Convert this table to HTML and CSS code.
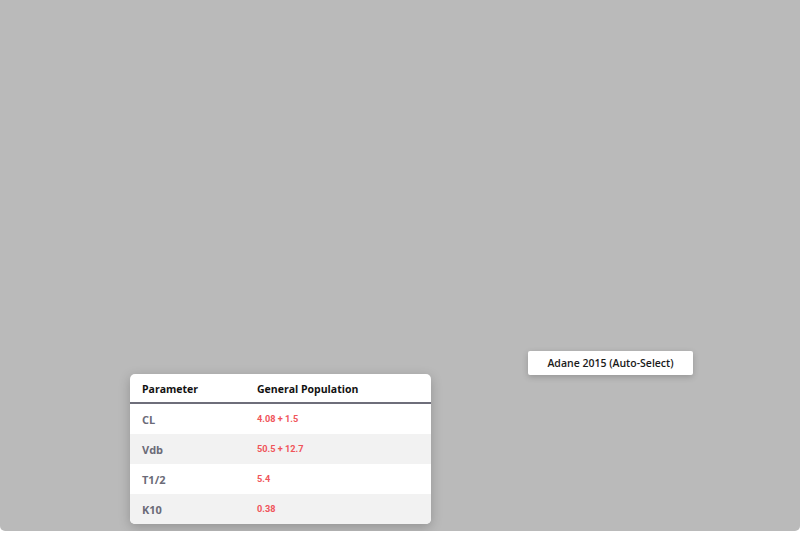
FILE: index.html
```html
<!DOCTYPE html>
<html>
<head>
<meta charset="utf-8">
<link rel="stylesheet" href="styles.css">
</head>
<body>
<div class="stage">
  <div class="toolbar">
    <div class="select-btn">Adane 2015 (Auto-Select)</div>
  </div>
  <div class="card">
    <div class="row head">
      <div class="c1">Parameter</div>
      <div class="c2">General Population</div>
    </div>
    <div class="row">
      <div class="c1 label">CL</div>
      <div class="c2 val">4.08 + 1.5</div>
    </div>
    <div class="row alt">
      <div class="c1 label">Vdb</div>
      <div class="c2 val">50.5 + 12.7</div>
    </div>
    <div class="row">
      <div class="c1 label">T1/2</div>
      <div class="c2 val">5.4</div>
    </div>
    <div class="row alt last">
      <div class="c1 label">K10</div>
      <div class="c2 val">0.38</div>
    </div>
  </div>
</div>
</body>
</html>
```
FILE: styles.css
```css
html, body {
  margin: 0;
  padding: 0;
  background: #ffffff;
}
.stage {
  width: 800px;
  height: 531px;
  background: #bababa;
  border-radius: 0 0 5px 5px;
  padding-top: 351px;
  box-sizing: border-box;
  font-family: "Open Sans", sans-serif;
}
.toolbar {
  display: flex;
  padding-left: 528px;
}
.select-btn {
  width: 165px;
  height: 24px;
  background: #fff;
  border-radius: 2px;
  box-shadow: 0 2px 6px rgba(0,0,0,0.2);
  font-size: 10.5px;
  font-weight: 600;
  color: #1a1a1a;
  display: flex;
  align-items: center;
  justify-content: center;
  box-sizing: border-box;
}
.card {
  margin-left: 130px;
  margin-top: -1px;
  width: 301px;
  background: #fff;
  border-radius: 5px;
  overflow: hidden;
  box-shadow: 0 3px 12px rgba(0,0,0,0.22);
}
.row {
  display: flex;
  height: 30px;
  align-items: center;
}
.row.alt {
  background: #f2f2f2;
}
.row.head {
  height: 27px;
  border-bottom: 2px solid #6e6e7a;
  font-size: 10.5px;
  font-weight: 700;
  color: #111;
  padding-top: 1px;
}
.c1 {
  width: 115px;
  padding-left: 12px;
}
.c2 {
  flex: 1;
}
.label {
  font-size: 11px;
  font-weight: 700;
  color: #6b6b78;
  padding-top: 1px;
}
.val {
  font-family: Roboto, sans-serif;
  font-size: 9.2px;
  font-weight: 700;
  color: #f0545a;
  margin-top: -2px;
}
```
